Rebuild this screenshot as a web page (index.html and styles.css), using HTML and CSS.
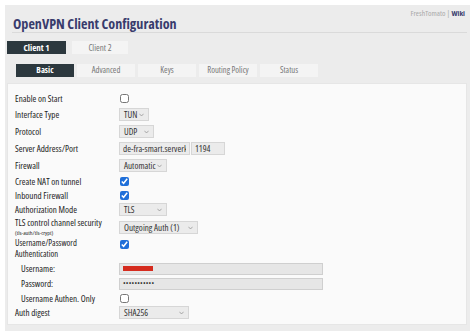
FILE: index.html
```html
<!DOCTYPE html>
<html lang="en">
<head>
    <meta charset="UTF-8">
    <meta name="viewport" content="width=device-width, initial-scale=1.0">
    <title>OpenVPN Client Configuration</title>
    <link rel="stylesheet" href="styles.css">
</head>
<body>
<div class="frame">
    <div class="header">
        <h1 class="title">OpenVPN Client Configuration</h1>
        <div class="links">FreshTomato | <b>Wiki</b></div>
    </div>

    <div class="tabs clients">
        <span class="tab active">Client 1</span>
        <span class="tab">Client 2</span>
    </div>

    <div class="tabs subtabs">
        <span class="tab active">Basic</span>
        <span class="tab">Advanced</span>
        <span class="tab">Keys</span>
        <span class="tab">Routing Policy</span>
        <span class="tab">Status</span>
    </div>

    <div class="panel">
        <div class="row h15">
            <span class="label">Enable on Start</span>
            <input type="checkbox" class="check">
        </div>
        <div class="row">
            <span class="label">Interface Type</span>
            <span class="select w-tun">TUN<svg class="chev" viewBox="0 0 6 4"><polyline points="0.5,0.5 3,3.2 5.5,0.5"/></svg></span>
        </div>
        <div class="row">
            <span class="label">Protocol</span>
            <span class="select w-udp">UDP<svg class="chev" viewBox="0 0 6 4"><polyline points="0.5,0.5 3,3.2 5.5,0.5"/></svg></span>
        </div>
        <div class="row">
            <span class="label">Server Address/Port</span>
            <input type="text" class="field w-addr" value="de-fra-smart.serverkompass.net">
            <input type="text" class="field w-port" value="1194">
        </div>
        <div class="row">
            <span class="label">Firewall</span>
            <span class="select w-auto">Automatic<svg class="chev" viewBox="0 0 6 4"><polyline points="0.5,0.5 3,3.2 5.5,0.5"/></svg></span>
        </div>
        <div class="row h14">
            <span class="label">Create NAT on tunnel</span>
            <input type="checkbox" class="check" checked>
        </div>
        <div class="row h14">
            <span class="label">Inbound Firewall</span>
            <input type="checkbox" class="check" checked>
        </div>
        <div class="row h15">
            <span class="label">Authorization Mode</span>
            <span class="select w-auto">TLS<svg class="chev" viewBox="0 0 6 4"><polyline points="0.5,0.5 3,3.2 5.5,0.5"/></svg></span>
        </div>
        <div class="row h19">
            <span class="label two">TLS control channel security<small>(tls-auth/tls-crypt)</small></span>
            <span class="select w-tls">Outgoing Auth (1)<svg class="chev" viewBox="0 0 6 4"><polyline points="0.5,0.5 3,3.2 5.5,0.5"/></svg></span>
        </div>
        <div class="row h22">
            <span class="label tight">Username/Password<br>Authentication</span>
            <input type="checkbox" class="check top" checked>
        </div>
        <div class="row h15">
            <span class="label sub">Username:</span>
            <span class="field w-long"><span class="redact"></span></span>
        </div>
        <div class="row h15">
            <span class="label sub">Password:</span>
            <span class="field w-long dots">•••••••••••</span>
        </div>
        <div class="row h14">
            <span class="label sub">Username Authen. Only</span>
            <input type="checkbox" class="check">
        </div>
        <div class="row h15">
            <span class="label">Auth digest</span>
            <span class="select w-sha">SHA256<svg class="chev" viewBox="0 0 6 4"><polyline points="0.5,0.5 3,3.2 5.5,0.5"/></svg></span>
        </div>
    </div>
</div>
</body>
</html>
```
FILE: styles.css
```css
body {
    margin: 0;
    padding: 5px 4px 0 5px;
    background: #fff;
    font-family: "Open Sans", "DejaVu Sans", sans-serif;
    font-stretch: 75%;
    color: #222;
}

.frame {
    background: #ececec;
    padding: 0 3px 6px 2px;
}

/* header */
.header {
    display: flex;
    justify-content: space-between;
    align-items: flex-start;
    margin-left: 5px;
    border-bottom: 1px solid #dadada;
}

.title {
    margin: 11px 0 0 1px;
    font-size: 14.1px;
    line-height: 16px;
    font-weight: bold;
    color: #383b6c;
}

.links {
    margin: 4px 2px 0 0;
    font-size: 7.8px;
    line-height: 9px;
    color: #a8a8a8;
}

.links b {
    color: #383b6c;
}

/* tabs */
.tabs {
    display: flex;
}

.tab {
    height: 13px;
    line-height: 13px;
    text-align: center;
    background: #f4f4f4;
    color: #777;
    font-size: 8.6px;
}

.tab.active {
    background: #2c383e;
    color: #fff;
    font-weight: bold;
}

.clients {
    margin-top: 8px;
    gap: 6px;
}

.clients .tab {
    width: 59px;
    font-size: 9px;
}

.clients .tab + .tab {
    width: 56px;
}

.subtabs {
    margin: 10px 0 0 9px;
    gap: 3px;
}

.subtabs .tab {
    width: 58px;
}

/* form panel */
.panel {
    margin-top: 6px;
    background: #fafafa;
    border: 1px solid #e6e6e6;
    padding: 7px 0 4px 7px;
}

.row {
    display: flex;
    align-items: center;
    min-height: 17px;
}

.row.h14 { min-height: 14px; }
.row.h15 { min-height: 15px; }
.row.h19 { min-height: 19px; }
.row.h22 { min-height: 22px; }

.label {
    width: 104px;
    flex: none;
    font-size: 9.1px;
    line-height: 11px;
}

.label.two {
    line-height: 12.4px;
}

.label small {
    display: block;
    font-size: 6px;
    line-height: 8.2px;
}

.label.tight {
    font-size: 8.6px;
    line-height: 11.7px;
}

.label.sub {
    width: 98px;
    padding-left: 6px;
}

.check {
    width: 9px;
    height: 9px;
    margin: 0 0 0 1px;
    accent-color: #1f6fd9;
}

.check.top {
    align-self: flex-start;
    margin-top: 2px;
}

.select {
    position: relative;
    box-sizing: border-box;
    display: inline-flex;
    align-items: center;
    height: 13px;
    padding: 0 4px;
    background: #ebebeb;
    border: 1px solid #d6d6d6;
    font-size: 9.1px;
    color: #333;
}

.chev {
    position: absolute;
    right: 4px;
    top: 4px;
    width: 5px;
    height: 4px;
    fill: none;
    stroke: #888;
    stroke-width: 0.8;
}

.w-tun { width: 30px; }
.w-udp { width: 35px; }
.w-auto { width: 48px; }
.w-tls { width: 79px; }
.w-sha { width: 70px; }

.field {
    box-sizing: border-box;
    height: 13px;
    margin: 0;
    padding: 0 3px;
    background: #ebebeb;
    border: 1px solid #d6d6d6;
    font-family: inherit;
    font-size: 9.1px;
    font-stretch: 75%;
    color: #333;
    outline: none;
}

.w-addr { width: 71px; }
.w-port { width: 34px; margin-left: 1px; }

.w-long {
    display: flex;
    align-items: center;
    width: 204px;
    height: 12px;
    border-color: #cfcfcf;
    background: #e6e6e6;
}

.redact {
    width: 30px;
    height: 5px;
    background: #d52b1e;
}

.dots {
    font-size: 7px;
    letter-spacing: 0.2px;
    color: #333;
}
```
